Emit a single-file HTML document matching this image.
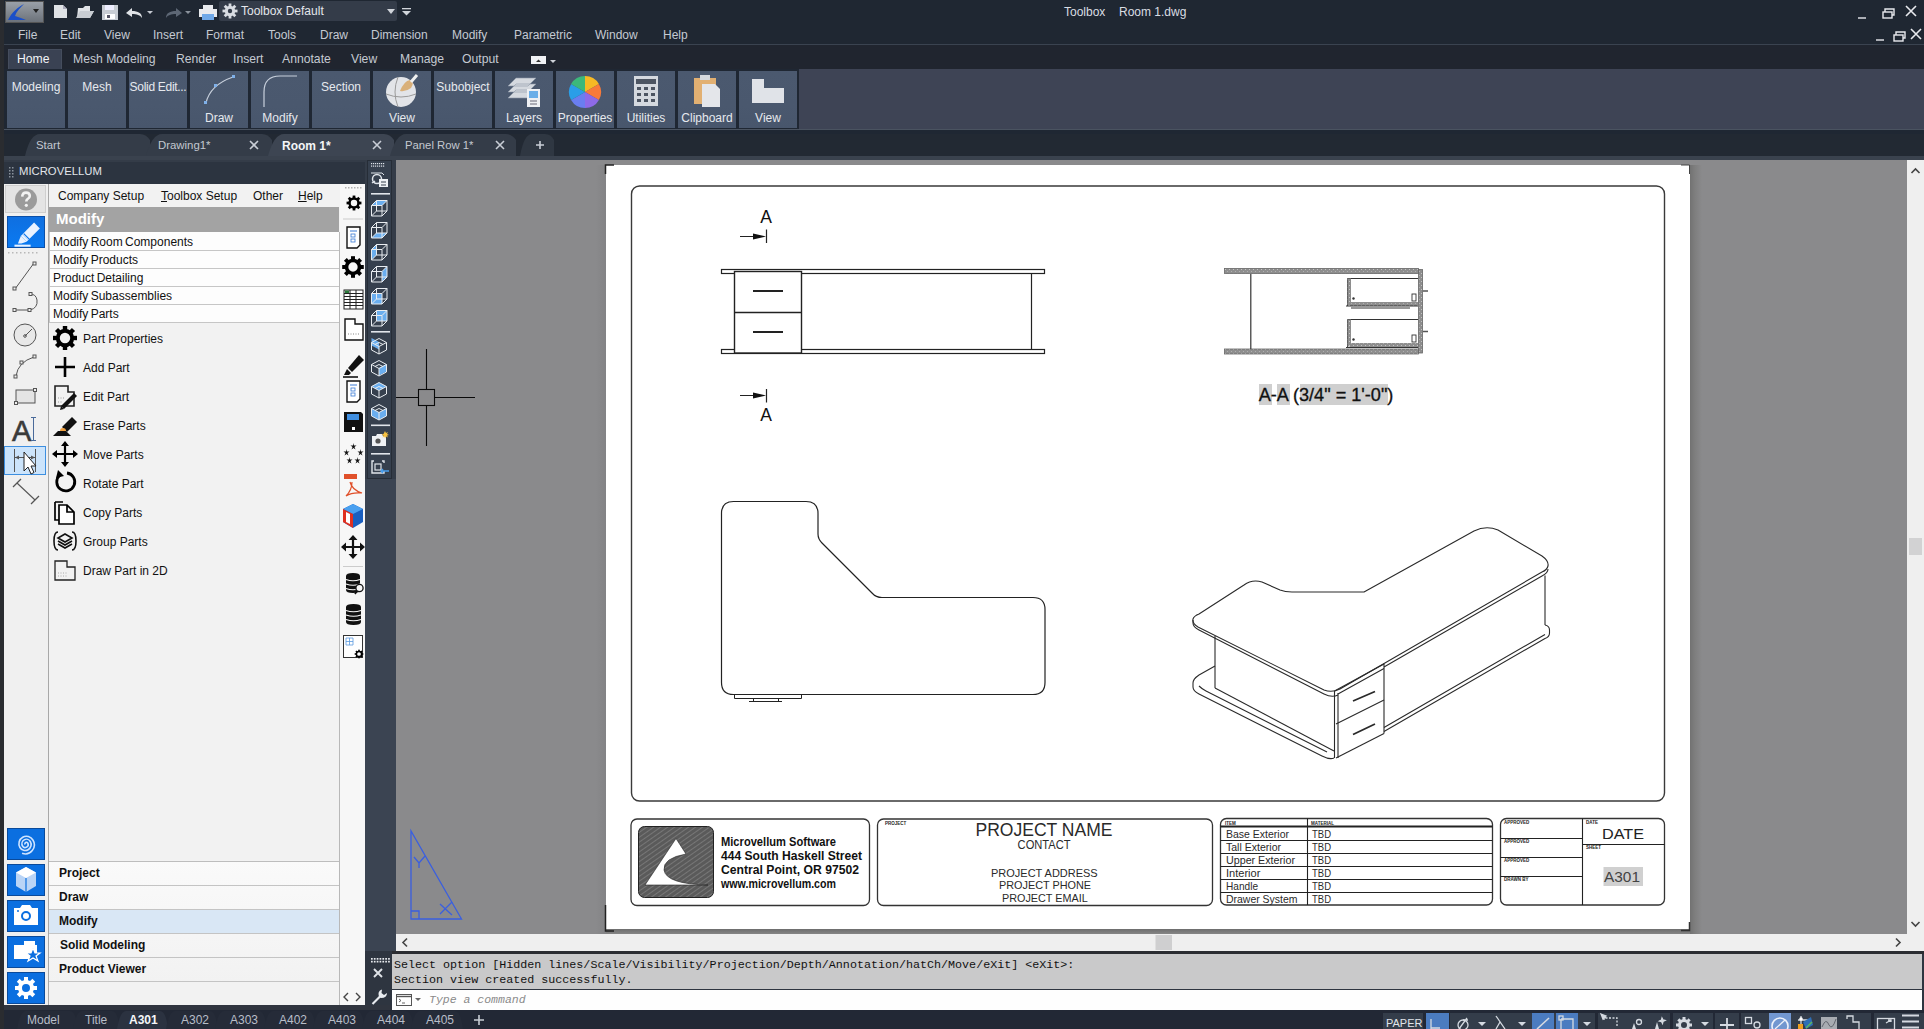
<!DOCTYPE html>
<html><head><meta charset="utf-8">
<style>
*{margin:0;padding:0;box-sizing:border-box}
html,body{width:1924px;height:1029px;overflow:hidden;background:#232a35;font-family:"Liberation Sans",sans-serif;position:relative}
.a{position:absolute}
.t{position:absolute;white-space:nowrap;line-height:1}
.mi{color:#c5cad2;font-size:12px;top:29px}
.rt{color:#c5cad2;font-size:12.2px;top:53px}
.rb{position:absolute;top:71px;height:57px;width:58px;background:linear-gradient(180deg,#4b596f 0%,#4a586e 60%,#48566c 100%)}
.rl{position:absolute;left:0;width:58px;text-align:center;color:#e6e9ee;font-size:12px;line-height:1;white-space:nowrap}
.dt{position:absolute;top:135px;height:24px;color:#b9bfc8;font-size:12px}
</style></head><body>
<!-- TITLE BAR -->
<div class="a" style="left:0;top:0;width:1924px;height:45px;background:#1f2732"></div>
<div class="a" style="left:0;top:0;width:4px;height:1029px;background:#2a2c30"></div>
<div class="a" style="left:4px;top:44px;width:1920px;height:1px;background:#3a4350"></div>
<div class="a" style="left:4px;top:45px;width:1920px;height:24px;background:#20252f"></div>
<!-- app button -->
<div class="a" style="left:5px;top:1px;width:39px;height:22px;background:linear-gradient(180deg,#9aa0a8,#6c727a);border:1px solid #555"></div>
<svg class="a" style="left:6px;top:2px" width="38" height="20" viewBox="0 0 38 20">
<path d="M2 18 C6 10 12 5 18 2 C14 6 10 10 9 14 C13 15 17 17 20 18 Z" fill="#1a4fc8"/>
<path d="M27 7 L33 7 L30 11 Z" fill="#222"/>
</svg>
<!-- QAT icons -->
<svg class="a" style="left:50px;top:3px" width="170" height="18" viewBox="0 0 170 18">
 <path d="M4 2 H13 L17 6 V15 H4 Z" fill="#dfe2e6"/><path d="M13 2 V6 H17" fill="#aab" />
 <path d="M28 5 H33 L35 3 H40 V8 H44 L40 15 H27 Z" fill="#dfe2e6"/><path d="M30 8 H44 L40 15 H26 Z" fill="#c8ccd2"/>
 <rect x="52" y="2" width="16" height="15" fill="#c8cdd4"/><rect x="55" y="2" width="9" height="5" fill="#eef"/><rect x="55" y="11" width="10" height="5" fill="#fff"/><rect x="57" y="12" width="3" height="3" fill="#556"/>
 <path d="M76 10 L82 5 V8 C88 8 92 10 92 15 C90 12 87 11 82 11 V14 Z" fill="#dfe2e6"/>
 <path d="M97 8 L103 8 L100 11 Z" fill="#c5cad2"/>
 <path d="M132 10 L126 5 V8 C120 8 116 10 116 15 C118 12 121 11 126 11 V14 Z" fill="#5d6775"/>
 <path d="M135 8 L141 8 L138 11 Z" fill="#8a929c"/>
 <rect x="153" y="2" width="10" height="4" fill="#e8eaee"/><rect x="149" y="6" width="18" height="8" fill="#e8eaee"/><rect x="152" y="11" width="12" height="6" fill="#6fa8e8"/>
</svg>
<div class="a" style="left:219px;top:1px;width:178px;height:20px;background:#343c49;border-radius:2px"></div>
<svg class="a" style="left:222px;top:3px" width="16" height="16" viewBox="0 0 16 16"><g fill="#d8dce2"><circle cx="8" cy="8" r="5.2"/><rect x="6.6" y="0.5" width="2.8" height="15"/><rect x="0.5" y="6.6" width="15" height="2.8"/><rect x="6.6" y="0.5" width="2.8" height="15" transform="rotate(45 8 8)"/><rect x="6.6" y="0.5" width="2.8" height="15" transform="rotate(-45 8 8)"/></g><circle cx="8" cy="8" r="2.2" fill="#343c49"/></svg>
<div class="t" style="left:241px;top:5px;color:#e4e7ec;font-size:12px">Toolbox Default</div>
<svg class="a" style="left:386px;top:8px" width="26" height="8" viewBox="0 0 26 8"><path d="M1 1 H9 L5 6 Z" fill="#d0d4da"/><rect x="16" y="0" width="9" height="1.3" fill="#d0d4da"/><path d="M16 3 H25 L20.5 7.5 Z" fill="#d0d4da"/></svg>
<div class="t" style="left:1064px;top:6px;color:#d9dde3;font-size:12px">Toolbox</div><div class="t" style="left:1119px;top:6px;color:#d9dde3;font-size:12px">Room 1.dwg</div>
<!-- window controls -->
<svg class="a" style="left:1850px;top:3px" width="74" height="40" viewBox="0 0 74 40">
 <g stroke="#e8eaee" stroke-width="1.4" fill="none">
 <path d="M8 15 H16"/>
 <rect x="33" y="9" width="9" height="6"/><path d="M35 9 V6 H44 V12 H42"/>
 <path d="M56 3 L66 13 M66 3 L56 13" stroke-width="1.6"/>
 <path d="M26 37 H34"/>
 <rect x="44" y="32" width="9" height="6"/><path d="M46 32 V29 H55 V35 H53"/>
 <path d="M61 26 L71 36 M71 26 L61 36" stroke-width="1.6"/>
 </g>
</svg>
<!-- MENU -->
<div class="t mi" style="left:18px">File</div>
<div class="t mi" style="left:60px">Edit</div>
<div class="t mi" style="left:104px">View</div>
<div class="t mi" style="left:153px">Insert</div>
<div class="t mi" style="left:206px">Format</div>
<div class="t mi" style="left:268px">Tools</div>
<div class="t mi" style="left:320px">Draw</div>
<div class="t mi" style="left:371px">Dimension</div>
<div class="t mi" style="left:452px">Modify</div>
<div class="t mi" style="left:514px">Parametric</div>
<div class="t mi" style="left:595px">Window</div>
<div class="t mi" style="left:663px">Help</div>
<!-- RIBBON TABS -->
<div class="a" style="left:8px;top:49px;width:54px;height:21px;background:#3a4253;border:1px solid #454d5d;border-bottom:none"></div>
<div class="t rt" style="left:17px;color:#f2f4f7">Home</div>
<div class="t rt" style="left:73px">Mesh Modeling</div>
<div class="t rt" style="left:176px">Render</div>
<div class="t rt" style="left:233px">Insert</div>
<div class="t rt" style="left:282px">Annotate</div>
<div class="t rt" style="left:351px">View</div>
<div class="t rt" style="left:400px">Manage</div>
<div class="t rt" style="left:462px">Output</div>
<div class="a" style="left:531px;top:56px;width:15px;height:8px;background:#f0f2f5"></div>
<svg class="a" style="left:531px;top:56px" width="26" height="9"><path d="M5 6 L7.5 3.5 L10 6 Z" fill="#333"/><path d="M19 4 H25 L22 7 Z" fill="#d0d4da"/></svg>
<!-- RIBBON PANEL -->
<div class="a" style="left:4px;top:69px;width:1920px;height:61px;background:#3e4455"></div>
<div class="a" style="left:4px;top:69px;width:795px;height:61px;background:#1f2733"></div>
<div class="a" style="left:4px;top:129px;width:1920px;height:1px;background:#4a5360"></div>
<div class="rb" style="left:7px"><div class="rl" style="top:10px">Modeling</div></div>
<div class="rb" style="left:68px"><div class="rl" style="top:10px">Mesh</div></div>
<div class="rb" style="left:129px"><div class="rl" style="top:10px;letter-spacing:-0.3px">Solid Edit...</div></div>
<div class="rb" style="left:190px"><div class="rl" style="top:41px">Draw</div></div>
<div class="rb" style="left:251px"><div class="rl" style="top:41px">Modify</div></div>
<div class="rb" style="left:312px"><div class="rl" style="top:10px">Section</div></div>
<div class="rb" style="left:373px"><div class="rl" style="top:41px">View</div></div>
<div class="rb" style="left:434px"><div class="rl" style="top:10px">Subobject</div></div>
<div class="rb" style="left:495px"><div class="rl" style="top:41px">Layers</div></div>
<div class="rb" style="left:556px"><div class="rl" style="top:41px">Properties</div></div>
<div class="rb" style="left:617px"><div class="rl" style="top:41px">Utilities</div></div>
<div class="rb" style="left:678px"><div class="rl" style="top:41px">Clipboard</div></div>
<div class="rb" style="left:739px"><div class="rl" style="top:41px">View</div></div>
<!-- ribbon icons -->
<svg class="a" style="left:190px;top:71px" width="620" height="40" viewBox="190 71 620 40">
 <!-- draw arc -->
 <path d="M206 103 Q210 85 233 77" stroke="#c8d0dc" stroke-width="1.2" fill="none"/>
 <rect x="204" y="101" width="3" height="3" fill="#7fb0e8"/><rect x="214" y="84" width="3" height="3" fill="#7fb0e8"/><rect x="232" y="75" width="3" height="3" fill="#7fb0e8"/>
 <!-- modify fillet -->
 <path d="M264 107 V92 Q264 76 280 76 H297" stroke="#c8d0dc" stroke-width="1.2" fill="none"/>
 <!-- view globe -->
 <circle cx="401" cy="92" r="15" fill="#e2e4e8"/>
 <path d="M386 94 Q401 100 416 94 M398 77 Q392 92 398 107" stroke="#9a9a9a" stroke-width="1" fill="none"/>
 <path d="M400 91 Q404 81 410 80 Q415 82 411 88 Q406 92 400 91 Z" fill="#d9b07a"/>
 <path d="M411 82 L417 75" stroke="#f0f0f0" stroke-width="3"/>
 <!-- layers -->
 <path d="M508 86 L516 78 H536 L528 86 Z M508 92 L516 84 H536 L528 92 Z M508 98 L516 90 H536 L528 98 Z" fill="#d5d9df" stroke="#8a95a5" stroke-width="0.6"/>
 <rect x="527" y="89" width="13" height="18" fill="#eef0f3"/><rect x="529" y="91" width="9" height="7" fill="#6aaee8"/>
 <path d="M530 101 H537 M530 104 H537" stroke="#445" stroke-width="0.8"/>
 <!-- properties color wheel -->
 <g transform="translate(585 92)">
  <path d="M0 0 L0 -16 A16 16 0 0 1 13.9 -8 Z" fill="#f7b924"/>
  <path d="M0 0 L13.9 -8 A16 16 0 0 1 13.9 8 Z" fill="#f97a3a"/>
  <path d="M0 0 L13.9 8 A16 16 0 0 1 0 16 Z" fill="#8e6ae8"/>
  <path d="M0 0 L0 16 A16 16 0 0 1 -13.9 8 Z" fill="#6a7ef0"/>
  <path d="M0 0 L-13.9 8 A16 16 0 0 1 -13.9 -8 Z" fill="#2a9ee8"/>
  <path d="M0 0 L-13.9 -8 A16 16 0 0 1 0 -16 Z" fill="#3cb87a"/>
 </g>
 <!-- utilities calculator -->
 <rect x="634" y="76" width="24" height="30" fill="#d5d9df"/><rect x="636" y="79" width="20" height="5" fill="#4d5562"/>
 <g fill="#4d5562"><rect x="637" y="87" width="4" height="3"/><rect x="644" y="87" width="4" height="3"/><rect x="651" y="87" width="4" height="3"/><rect x="637" y="93" width="4" height="3"/><rect x="644" y="93" width="4" height="3"/><rect x="651" y="93" width="4" height="3"/><rect x="637" y="99" width="4" height="3"/><rect x="644" y="99" width="4" height="3"/><rect x="651" y="99" width="4" height="3"/></g>
 <!-- clipboard -->
 <rect x="694" y="78" width="22" height="26" fill="#e2b072"/><rect x="700" y="75" width="10" height="5" fill="#d5d9df"/>
 <path d="M702 84 H715 L720 89 V107 H702 Z" fill="#e4e6ea"/>
 <!-- view L -->
 <path d="M752 79 H764 V88 H784 V103 H752 Z" fill="#e0e3e8"/>
</svg>
<!-- DOC TABS -->
<div class="a" style="left:4px;top:130px;width:1920px;height:30px;background:#222933"></div>
<div class="a" style="left:4px;top:130px;width:1920px;height:4px;background:#1f2733"></div>

<!-- doc tabs -->
<svg class="a" style="left:4px;top:130px" width="560" height="30" viewBox="4 130 560 30">
 <path d="M25 156 Q30 134 40 134 H140 Q146 134 150 140 L150 156 Z" fill="#343c48"/>
 <path d="M146 156 Q152 134 162 134 H262 Q268 134 272 140 L272 156 Z" fill="#343c48"/>
 <path d="M268 156 Q274 134 284 134 H384 Q390 134 394 140 L394 156 Z" fill="#3d4552"/>
 <path d="M390 156 Q396 134 406 134 H506 Q512 134 516 140 L516 156 Z" fill="#343c48"/>
 <path d="M520 156 Q524 134 532 134 H545 Q551 134 554 140 L554 156 Z" fill="#2f3742"/>
 <rect x="4" y="156" width="560" height="4" fill="#3a424e"/>
 <g stroke="#c9ced6" stroke-width="1.6"><path d="M250 141 L258 149 M258 141 L250 149"/><path d="M373 141 L381 149 M381 141 L373 149"/><path d="M496 141 L504 149 M504 141 L496 149"/></g>
 <path d="M536 145 H544 M540 141 V149" stroke="#c9ced6" stroke-width="1.6"/>
</svg>
<div class="a" style="left:4px;top:156px;width:1920px;height:4px;background:#3a424e"></div>
<div class="t" style="left:36px;top:140px;color:#c3c8d0;font-size:11.4px">Start</div>
<div class="t" style="left:158px;top:140px;color:#c3c8d0;font-size:11.4px">Drawing1*</div>
<div class="t" style="left:282px;top:140px;color:#f4f6f8;font-size:12px;font-weight:bold">Room 1*</div>
<div class="t" style="left:405px;top:140px;color:#c3c8d0;font-size:11.3px">Panel Row 1*</div>

<!-- LEFT PANEL -->
<div class="a" style="left:4px;top:160px;width:392px;height:850px;background:#343c48"></div>
<div class="a" style="left:4px;top:162px;width:361px;height:22px;background:#2c3440"></div>
<svg class="a" style="left:9px;top:166px" width="6" height="14"><g fill="#8a929c"><rect x="0" y="1" width="1.5" height="1.5"/><rect x="3" y="1" width="1.5" height="1.5"/><rect x="0" y="4" width="1.5" height="1.5"/><rect x="3" y="4" width="1.5" height="1.5"/><rect x="0" y="7" width="1.5" height="1.5"/><rect x="3" y="7" width="1.5" height="1.5"/><rect x="0" y="10" width="1.5" height="1.5"/><rect x="3" y="10" width="1.5" height="1.5"/></g></svg>
<div class="t" style="left:19px;top:166px;color:#e2e5ea;font-size:11.3px">MICROVELLUM</div>
<div class="a" style="left:4px;top:184px;width:361px;height:821px;background:#f2f2f2"></div>
<div class="a" style="left:4px;top:184px;width:44px;height:821px;background:#f0f0f0"></div>
<div class="a" style="left:48px;top:184px;width:1px;height:821px;background:#a8a8a8"></div>
<div class="a" style="left:340px;top:184px;width:25px;height:821px;background:#f7f7f7"></div>
<div class="a" style="left:339px;top:232px;width:1px;height:773px;background:#b8b8b8"></div>
<!-- ? button -->
<div class="a" style="left:5px;top:185px;width:41px;height:28px;background:#e4e4e4;border:1px solid #cfcfcf"></div>
<svg class="a" style="left:14px;top:188px" width="24" height="24" viewBox="0 0 24 24"><circle cx="12" cy="11.5" r="11" fill="#9b9b9b"/><path d="M8.2 8.6 Q8.5 4.6 12 4.6 Q15.8 4.6 15.8 8 Q15.8 10 13.5 11.2 Q12.3 11.9 12.3 13.6" stroke="#f2f2f2" stroke-width="2.6" fill="none"/><circle cx="12.3" cy="17.3" r="1.6" fill="#f2f2f2"/></svg>
<!-- pencil blue -->
<div class="a" style="left:7px;top:216px;width:38px;height:32px;background:linear-gradient(180deg,#0f6fe0,#0a7af2);border:1px solid #0a4fa8"></div>
<svg class="a" style="left:11px;top:218px" width="30" height="30" viewBox="0 0 26 26"><path d="M10 14 L20 4 L25 9 L15 19 Z" fill="#eaf2ff"/><path d="M8.5 15.5 L10 14 L15 19 L13.5 20.5 Z" fill="#eaf2ff"/><path d="M8.5 15.5 L13.5 20.5 L9 22 L6 22 Z" fill="#eaf2ff"/><path d="M3 24 H17" stroke="#eaf2ff" stroke-width="1.8"/><path d="M11 13.5 L16 18.5" stroke="#0a72e8" stroke-width="1"/></svg>
<svg class="a" style="left:8px;top:252px" width="32" height="3"><g fill="#b8b8b8"><rect x="0" y="0" width="1.5" height="1.5"/><rect x="4" y="0" width="1.5" height="1.5"/><rect x="8" y="0" width="1.5" height="1.5"/><rect x="12" y="0" width="1.5" height="1.5"/><rect x="16" y="0" width="1.5" height="1.5"/><rect x="20" y="0" width="1.5" height="1.5"/><rect x="24" y="0" width="1.5" height="1.5"/><rect x="28" y="0" width="1.5" height="1.5"/></g></svg>
<!-- left draw tool icons -->
<svg class="a" style="left:4px;top:256px" width="44" height="250" viewBox="4 256 44 250">
 <g stroke="#555" stroke-width="1" fill="none">
  <path d="M15 289 L34 263"/><rect x="13" y="287" width="3" height="3" fill="#f0f0f0"/><rect x="33" y="262" width="3" height="3" fill="#f0f0f0"/>
  <path d="M14 310 H30 Q38 308 37 300 Q36 294 30 294"/><rect x="13" y="308.5" width="3" height="3" fill="#f0f0f0"/><rect x="28" y="308.5" width="3" height="3" fill="#f0f0f0"/><rect x="29" y="292.5" width="3" height="3" fill="#f0f0f0"/>
  <circle cx="25" cy="335" r="11" fill="#e8e8e8"/><path d="M25 336 L32 329"/><circle cx="25" cy="336" r="1.3"/>
  <path d="M16 376 Q18 362 34 357"/><rect x="14" y="375" width="3" height="3" fill="#f0f0f0"/><rect x="33" y="355" width="3" height="3" fill="#f0f0f0"/><rect x="20" y="361" width="3" height="3" fill="#f0f0f0"/>
  <rect x="16" y="390" width="19" height="13" fill="#e4e4e4"/><rect x="14.5" y="401.5" width="3" height="3" fill="#f0f0f0"/><rect x="33.5" y="388.5" width="3" height="3" fill="#f0f0f0"/>
 </g>
 <text x="12" y="441" font-family="Liberation Sans" font-size="29" fill="#3a3a3a" stroke="#3a3a3a" stroke-width="0.6">A</text>
 <path d="M33.5 417 V441 M31 417.5 H36 M31 440.5 H36" stroke="#4a6a9a" stroke-width="1"/>
 <rect x="4.5" y="446.5" width="41" height="28" fill="#cce4fb" stroke="#3d8fe0" stroke-width="1"/>
 <path d="M14.5 449 V472 M35.5 449 V472 M15 457.5 H35" stroke="#555" stroke-width="1"/>
 <path d="M15 457.5 L19 455.5 V459.5 Z M35 457.5 L31 455.5 V459.5 Z" fill="#555"/>
 <path d="M24 452 V471 L28 467 L31 474 L34 472.5 L31 466 L36 466 Z" fill="#fff" stroke="#222" stroke-width="1"/>
 <path d="M17 483 L35 500" stroke="#555" stroke-width="1.1"/><path d="M13 487 L21 479 M31 504 L39 496" stroke="#555" stroke-width="1.3"/>
</svg>
<!-- menu row -->
<div class="t" style="left:58px;top:190px;color:#111;font-size:12px">Company Setup</div>
<div class="t" style="left:161px;top:190px;color:#111;font-size:12px"><u>T</u>oolbox Setup</div>
<div class="t" style="left:253px;top:190px;color:#111;font-size:12px">Other</div>
<div class="t" style="left:298px;top:190px;color:#111;font-size:12px"><u>H</u>elp</div>
<!-- Modify header -->
<div class="a" style="left:49px;top:207px;width:290px;height:25px;background:#a3a3a3"></div>
<div class="t" style="left:56px;top:211px;color:#fff;font-size:15px;font-weight:bold">Modify</div>
<!-- list rows -->
<div class="a" style="left:49px;top:232px;width:290px;height:90px;background:#fdfdfd"></div>
<div class="a" style="left:49px;top:250px;width:290px;height:1px;background:#c6c6c6"></div>
<div class="a" style="left:49px;top:268px;width:290px;height:1px;background:#c6c6c6"></div>
<div class="a" style="left:49px;top:286px;width:290px;height:1px;background:#c6c6c6"></div>
<div class="a" style="left:49px;top:304px;width:290px;height:1px;background:#c6c6c6"></div>
<div class="a" style="left:49px;top:322px;width:290px;height:1px;background:#c6c6c6"></div>
<div class="a" style="left:49px;top:232px;width:1px;height:90px;background:#c6c6c6"></div>
<div class="t" style="left:53px;top:236px;color:#111;font-size:12px;word-spacing:-1px">Modify Room Components</div>
<div class="t" style="left:53px;top:254px;color:#111;font-size:12px;word-spacing:-1px">Modify Products</div>
<div class="t" style="left:53px;top:272px;color:#111;font-size:12px;word-spacing:-1px">Product Detailing</div>
<div class="t" style="left:53px;top:290px;color:#111;font-size:12px;word-spacing:-1px">Modify Subassemblies</div>
<div class="t" style="left:53px;top:308px;color:#111;font-size:12px;word-spacing:-1px">Modify Parts</div>
<!-- icon list -->
<div class="t" style="left:83px;top:333px;color:#111;font-size:12px">Part Properties</div>
<div class="t" style="left:83px;top:362px;color:#111;font-size:12px">Add Part</div>
<div class="t" style="left:83px;top:391px;color:#111;font-size:12px">Edit Part</div>
<div class="t" style="left:83px;top:420px;color:#111;font-size:12px">Erase Parts</div>
<div class="t" style="left:83px;top:449px;color:#111;font-size:12px">Move Parts</div>
<div class="t" style="left:83px;top:478px;color:#111;font-size:12px">Rotate Part</div>
<div class="t" style="left:83px;top:507px;color:#111;font-size:12px">Copy Parts</div>
<div class="t" style="left:83px;top:536px;color:#111;font-size:12px">Group Parts</div>
<div class="t" style="left:83px;top:565px;color:#111;font-size:12px">Draw Part in 2D</div>
<svg class="a" style="left:50px;top:324px" width="30" height="262" viewBox="50 324 30 262">
 <defs><g id="gear"><circle r="7.2" fill="none" stroke="#000" stroke-width="4"/><g fill="#000"><rect x="-2.2" y="-12" width="4.4" height="5"/><rect x="-2.2" y="7" width="4.4" height="5"/><rect x="-12" y="-2.2" width="5" height="4.4"/><rect x="7" y="-2.2" width="5" height="4.4"/><g transform="rotate(45)"><rect x="-2.2" y="-12" width="4.4" height="5"/><rect x="-2.2" y="7" width="4.4" height="5"/><rect x="-12" y="-2.2" width="5" height="4.4"/><rect x="7" y="-2.2" width="5" height="4.4"/></g></g></g></defs>
 <use href="#gear" x="65" y="338"/>
 <path d="M55 367 H75 M65 357 V377" stroke="#000" stroke-width="2.6"/>
 <path d="M55 386 H68 V392 H74 V406 H55 Z" fill="none" stroke="#222" stroke-width="1.6"/>
 <path d="M58 398 H64 M58 402 H62" stroke="#888" stroke-width="0.8" stroke-dasharray="1 1.5"/>
 <path d="M61 406 L74 393 L77 396 L64 409 Z" fill="#111"/><path d="M61 406 L60 410 L64 409 Z" fill="#111"/>
 <path d="M62 427 L72 417 L77 422 L67 432 Z" fill="#111"/><circle cx="63" cy="431" r="3" fill="#f0a040"/><path d="M53 436 L58 431 H66 L71 436 Z" fill="#111"/>
 <path d="M65 444 V464 M55 454 H75" stroke="#000" stroke-width="2.2"/><path d="M65 441 L61 446 H69 Z M65 467 L61 462 H69 Z M52 454 L57 450 V458 Z M78 454 L73 450 V458 Z" fill="#000"/>
 <path d="M60 475 A9 9 0 1 0 67 473" fill="none" stroke="#000" stroke-width="2.8"/><path d="M58 470 L64 476 L56 478 Z" fill="#000"/>
 <path d="M59 505 H67 L74 512 V524 H59 Z M67 505 V512 H74" fill="#fff" stroke="#000" stroke-width="1.7"/><path d="M55 502 H63 M55 502 V520 H59" fill="none" stroke="#000" stroke-width="1.7"/>
 <path d="M58 532 Q54 532 54 541 Q54 550 58 550 M72 532 Q76 532 76 541 Q76 550 72 550" fill="none" stroke="#111" stroke-width="1.6"/>
 <path d="M65 534 L72 538 L65 542 L58 538 Z M58 541 L65 545 L72 541 M58 544 L65 548 L72 544" fill="none" stroke="#111" stroke-width="1.6"/>
 <path d="M55 561 H67 V567 H75 V580 H55 Z" fill="none" stroke="#222" stroke-width="1.3"/><path d="M58 573 H68 M58 576 H68" stroke="#999" stroke-width="0.8" stroke-dasharray="1 1.5"/>
</svg>
<!-- bottom nav -->
<div class="a" style="left:49px;top:862px;width:290px;height:120px;background:linear-gradient(180deg,#fafafa,#f2f2f2)"></div>
<div class="a" style="left:49px;top:910px;width:290px;height:24px;background:#d9e7f5"></div>
<div class="a" style="left:49px;top:861px;width:290px;height:1px;background:#bdbdbd"></div>
<div class="a" style="left:49px;top:885px;width:290px;height:1px;background:#c4c4c4"></div>
<div class="a" style="left:49px;top:909px;width:290px;height:1px;background:#c4c4c4"></div>
<div class="a" style="left:49px;top:933px;width:290px;height:1px;background:#c4c4c4"></div>
<div class="a" style="left:49px;top:957px;width:290px;height:1px;background:#c4c4c4"></div>
<div class="a" style="left:49px;top:981px;width:290px;height:1px;background:#c4c4c4"></div>
<div class="t" style="left:59px;top:867px;color:#111;font-size:12px;font-weight:bold">Project</div>
<div class="t" style="left:59px;top:891px;color:#111;font-size:12px;font-weight:bold">Draw</div>
<div class="t" style="left:59px;top:915px;color:#111;font-size:12px;font-weight:bold">Modify</div>
<div class="t" style="left:60px;top:939px;color:#111;font-size:12px;font-weight:bold">Solid Modeling</div>
<div class="t" style="left:59px;top:963px;color:#111;font-size:12px;font-weight:bold">Product Viewer</div>
<!-- blue buttons -->
<div class="a" style="left:7px;top:828px;width:38px;height:32px;background:#0b6fe0;border:1px solid #0a4a9a"></div>
<div class="a" style="left:7px;top:864px;width:38px;height:32px;background:#0b6fe0;border:1px solid #0a4a9a"></div>
<div class="a" style="left:7px;top:900px;width:38px;height:32px;background:#0b6fe0;border:1px solid #0a4a9a"></div>
<div class="a" style="left:7px;top:936px;width:38px;height:32px;background:#0b6fe0;border:1px solid #0a4a9a"></div>
<div class="a" style="left:7px;top:972px;width:38px;height:32px;background:#0b6fe0;border:1px solid #0a4a9a"></div>
<svg class="a" style="left:7px;top:828px" width="38" height="176" viewBox="7 828 38 176">
 <g fill="none" stroke="#cfe4ff" stroke-width="1.5">
  <path d="M25 844 A1.5 1.5 0 0 1 28 844 A3 3 0 0 1 22 844 A4.5 4.5 0 0 1 31 844 A6 6 0 0 1 19 844 A7.5 7.5 0 0 1 34 844 A9 9 0 0 1 18 850" stroke-width="1.6" transform="rotate(-30 26 844)"/>
 </g>
 <path d="M26 867 L36 872.5 V886 L26 892 L16 886 V872.5 Z" fill="#b9d4f6"/><path d="M26 867 L36 872.5 L26 878 L16 872.5 Z" fill="#fff"/><path d="M26 878 V892" stroke="#0b6fe0" stroke-width="1.2"/>
 <path d="M14 908 H20 L22 905 H30 L32 908 H38 V925 H14 Z" fill="#fff"/><circle cx="26" cy="916" r="4" fill="none" stroke="#0b6fe0" stroke-width="2"/><circle cx="18" cy="911" r="1" fill="#0b6fe0"/>
 <path d="M14 945 H24 V941 H35 V945 H37 V959 H14 Z" fill="#fff"/><path d="M33 948 L35 953 L40 953 L36 956 L38 961 L33 958 L28 961 L30 956 L26 953 L31 953 Z" fill="#0b6fe0" stroke="#fff" stroke-width="1.2"/>
 <g transform="translate(26 988)"><circle r="6" fill="none" stroke="#fff" stroke-width="4"/><g fill="#fff"><rect x="-2" y="-11" width="4" height="5"/><rect x="-2" y="6" width="4" height="5"/><rect x="-11" y="-2" width="5" height="4"/><rect x="6" y="-2" width="5" height="4"/><g transform="rotate(45)"><rect x="-2" y="-11" width="4" height="5"/><rect x="-2" y="6" width="4" height="5"/><rect x="-11" y="-2" width="5" height="4"/><rect x="6" y="-2" width="5" height="4"/></g></g></g>
</svg>
<!-- scroll arrows -->
<svg class="a" style="left:340px;top:990px" width="25" height="14"><path d="M8 3 L4 7 L8 11 M16 3 L20 7 L16 11" stroke="#444" stroke-width="1.4" fill="none"/></svg>


<!-- RIGHT TOOL COLUMN 1 -->
<svg class="a" style="left:340px;top:184px" width="25" height="480" viewBox="340 184 25 480">
 <g fill="#b0b0b0"><rect x="345" y="187" width="1.5" height="1.5"/><rect x="348" y="187" width="1.5" height="1.5"/><rect x="351" y="187" width="1.5" height="1.5"/><rect x="354" y="187" width="1.5" height="1.5"/><rect x="357" y="187" width="1.5" height="1.5"/><rect x="360" y="187" width="1.5" height="1.5"/></g>
 <g transform="translate(354 203) scale(0.62)"><use href="#gear"/></g>
 <rect x="343" y="218.5" width="20" height="1" fill="#ccc"/>
 <path d="M347 227 H360 V245 L357 248 H347 Z" fill="#fff" stroke="#111" stroke-width="1.4"/><path d="M350 231 H357" stroke="#3a7bd5" stroke-width="1"/><rect x="351" y="234" width="4" height="3" fill="none" stroke="#3a7bd5" stroke-width="0.8"/><rect x="351" y="239" width="4" height="3" fill="none" stroke="#3a7bd5" stroke-width="0.8"/>
 <g transform="translate(353 267) scale(0.9)"><use href="#gear"/></g>
 <rect x="344" y="290" width="19" height="19" fill="#fff" stroke="#222" stroke-width="1"/>
 <path d="M344 293.5 H363 M344 296.5 H363 M344 299.5 H363 M344 302.5 H363 M344 305.5 H363 M350 290 V309 M356 290 V309" stroke="#222" stroke-width="1"/><rect x="345" y="290.5" width="4" height="2.5" fill="#2a7a3a"/>
 <path d="M345 319 H355 V324 H363 V340 H345 Z" fill="#fff" stroke="#111" stroke-width="1.4"/><path d="M348 334 H360" stroke="#666" stroke-width="0.8" stroke-dasharray="1 1.5"/>
 <path d="M348 368 L359 355 L364 360 L352 372 Z" fill="#111"/><path d="M347 369 L351 373 L349 375 L344 375 Z" fill="#111"/><path d="M343 377 H358" stroke="#111" stroke-width="1.6"/>
 <path d="M347 381 H360 V399 L357 402 H347 Z" fill="#fff" stroke="#111" stroke-width="1.4"/><path d="M350 385 H357" stroke="#3a7bd5" stroke-width="1"/><rect x="351" y="388" width="4" height="3" fill="none" stroke="#3a7bd5" stroke-width="0.8"/><rect x="351" y="393" width="4" height="3" fill="none" stroke="#3a7bd5" stroke-width="0.8"/>
 <path d="M344 412 H361 L363 414 V432 H344 Z" fill="#111"/><rect x="347" y="414" width="12" height="6" fill="#3f8ee0"/><path d="M348 432 V426 H359 V432 Z" fill="#111"/><rect x="352" y="427" width="3" height="3" fill="#fff"/>
 <g fill="#111"><path d="M353 443 l1 2.5 h2.5 l-2 1.5 l1 2.5 l-2 -1.5 l-2 1.5 l1 -2.5 l-2 -1.5 h2.5 z"/><path d="M346 449 l1 2.5 h2.5 l-2 1.5 l1 2.5 l-2 -1.5 l-2 1.5 l1 -2.5 l-2 -1.5 h2.5 z"/><path d="M360 449 l1 2.5 h2.5 l-2 1.5 l1 2.5 l-2 -1.5 l-2 1.5 l1 -2.5 l-2 -1.5 h2.5 z"/><path d="M349 457 l1 2.5 h2.5 l-2 1.5 l1 2.5 l-2 -1.5 l-2 1.5 l1 -2.5 l-2 -1.5 h2.5 z"/><path d="M357 457 l1 2.5 h2.5 l-2 1.5 l1 2.5 l-2 -1.5 l-2 1.5 l1 -2.5 l-2 -1.5 h2.5 z"/></g>
 <rect x="344" y="474" width="13" height="5" fill="#e0502a"/><path d="M350 482 Q352 490 362 493 Q352 492 346 496 Q352 490 352 482" fill="none" stroke="#e0502a" stroke-width="1.2"/>
 <path d="M353 504 L363 509 V522 L353 528 L343 522 V509 Z" fill="#1a5fc0"/><path d="M353 504 L363 509 L353 514 L343 509 Z" fill="#4aa0f0"/><path d="M343 509 L353 514 V528 L343 522 Z" fill="#e03020"/><path d="M346 512 L350 514 V524 L346 522 Z" fill="#fff"/>
 <path d="M353 537 V557 M343 547 H363" stroke="#111" stroke-width="2.2"/><path d="M353 535 L348.5 540 H357.5 Z M353 559 L348.5 554 H357.5 Z M341 547 L346 542.5 V551.5 Z M365 547 L360 542.5 V551.5 Z" fill="#111"/>
 <rect x="343" y="566" width="20" height="1" fill="#ccc"/>
 <path d="M346 576 Q346 573 353 573 Q360 573 360 576 V590 Q360 593 353 593 Q346 593 346 590 Z" fill="#111"/>
 <path d="M346 579.5 Q353 582 360 579.5 M346 584 Q353 586.5 360 584 M346 588.5 Q353 591 360 588.5" stroke="#f7f7f7" stroke-width="1.2" fill="none"/>
 <circle cx="359.5" cy="588" r="3.6" fill="#f7f7f7" stroke="#111" stroke-width="1.3"/><path d="M357 591 L355 594" stroke="#111" stroke-width="1.6"/>
 <path d="M346 607 Q346 604 353.5 604 Q361 604 361 607 V622 Q361 625 353.5 625 Q346 625 346 622 Z" fill="#111"/>
 <path d="M346 610.5 Q353.5 613 361 610.5 M346 615 Q353.5 617.5 361 615 M346 619.5 Q353.5 622 361 619.5" stroke="#f7f7f7" stroke-width="1.2" fill="none"/>
 <rect x="343.5" y="635.5" width="19" height="22" fill="#fff" stroke="#333" stroke-width="1"/><path d="M346 638 H353 V645 H346 Z M349.5 638 V645 M346 641.5 H353" stroke="#5b9ae0" stroke-width="0.8" fill="none"/>
 <g transform="translate(359 654) scale(0.36)"><use href="#gear"/></g>
</svg>
<!-- RIGHT TOOL COLUMN 2 -->
<div class="a" style="left:367px;top:160px;width:25px;height:319px;background:#36404e;border:1px solid #262d37"></div>
<svg class="a" style="left:367px;top:160px" width="25" height="320" viewBox="367 160 25 320">
 <defs>
  <g id="cube"><path d="M0.5 5.5 H11 V16 H0.5 Z M5.5 0.5 H16 V11 H5.5 Z M0.5 5.5 L5.5 0.5 M11 5.5 L16 0.5 M11 16 L16 11 M0.5 16 L5.5 11" fill="none" stroke="#e8ecf0" stroke-width="1"/></g>
  <g id="hcube"><path d="M8 0.5 L15.5 4.5 V12 L8 16 L0.5 12 V4.5 Z M0.5 4.5 L8 8.5 L15.5 4.5 M8 8.5 V16 M4 6.5 L8 4.5 L12 6.5" fill="none" stroke="#e8ecf0" stroke-width="1"/></g>
 </defs>
 <g fill="#dde2e8"><rect x="371" y="163" width="1.2" height="1.2"/><rect x="371" y="165.5" width="1.2" height="1.2"/><rect x="373" y="163" width="1.2" height="1.2"/><rect x="373" y="165.5" width="1.2" height="1.2"/><rect x="375" y="163" width="1.2" height="1.2"/><rect x="375" y="165.5" width="1.2" height="1.2"/><rect x="377" y="163" width="1.2" height="1.2"/><rect x="377" y="165.5" width="1.2" height="1.2"/><rect x="379" y="163" width="1.2" height="1.2"/><rect x="379" y="165.5" width="1.2" height="1.2"/><rect x="381" y="163" width="1.2" height="1.2"/><rect x="381" y="165.5" width="1.2" height="1.2"/><rect x="383" y="163" width="1.2" height="1.2"/><rect x="383" y="165.5" width="1.2" height="1.2"/></g>
 <circle cx="377" cy="179" r="4.5" fill="none" stroke="#dfe4ea" stroke-width="1.5"/><path d="M372 183 L375 181" stroke="#dfe4ea" stroke-width="1.5"/><path d="M371 173 H382 L384 175" fill="none" stroke="#dfe4ea" stroke-width="1"/><rect x="379" y="179" width="9" height="8" fill="#eef1f4"/><path d="M381 182 H386 M381 185 H386" stroke="#36404e" stroke-width="1"/>
 <rect x="371" y="193" width="19" height="1.6" fill="#e0e4ea"/>
 <path d="M371.5 205.5 L376.5 200.5 H387 L382 205.5 Z" fill="#6aaeef"/><use href="#cube" x="371" y="200"/>
 <path d="M371.5 238 L376.5 233 H387 L382 238 Z" fill="#6aaeef"/><use href="#cube" x="371" y="222"/>
 <path d="M371.5 249.5 L376.5 244.5 V255 L371.5 260 Z" fill="#6aaeef"/><use href="#cube" x="371" y="244"/>
 <path d="M382 271.5 L387 266.5 V277 L382 282 Z" fill="#6aaeef"/><use href="#cube" x="371" y="266"/>
 <rect x="371.5" y="293.5" width="10.5" height="10.5" fill="#6aaeef"/><use href="#cube" x="371" y="288"/>
 <rect x="376.5" y="310.5" width="10.5" height="10.5" fill="#6aaeef"/><use href="#cube" x="371" y="310"/>
 <rect x="371" y="331" width="19" height="1.6" fill="#e0e4ea"/>
 <path d="M371.5 338 L379 342 V349.5 L371.5 345.5 Z" fill="#6aaeef"/><use href="#hcube" x="371" y="338"/>
 <path d="M379 368 L386.5 364 V371.5 L379 375.5 Z" fill="#6aaeef"/><use href="#hcube" x="371" y="360"/>
 <path d="M371.5 386.5 L379 382.5 L386.5 386.5 L379 390.5 Z" fill="#6aaeef"/><use href="#hcube" x="371" y="382"/>
 <path d="M379 412.5 V420 L386.5 416 V408.5 Z M371.5 408.5 L379 412.5 V420 L371.5 416 Z" fill="#6aaeef"/><use href="#hcube" x="371" y="404"/>
 <rect x="371" y="424.5" width="19" height="1.6" fill="#e0e4ea"/>
 <path d="M372 436 H376 L377 434 H382 L383 436 H386 V446 H372 Z" fill="#eef1f4"/><circle cx="378" cy="441" r="2.6" fill="#555"/><path d="M385 431 l1 2 l2 -1 l-1 2 l2 1 l-2 0.5 l1 2 l-2 -1 l-1 2 l-0.5 -2 l-2 1 l1 -2 l-2 -1 l2 -0.5 z" fill="#f5c040"/>
 <rect x="371" y="453" width="19" height="1.6" fill="#e0e4ea"/>
 <path d="M374 461 H372 V473 H384 V471 M382 461 H384 V463" fill="none" stroke="#dfe4ea" stroke-width="1.4"/><rect x="375" y="464" width="6" height="6" fill="none" stroke="#dfe4ea" stroke-width="1.2"/><path d="M381 471 H389 M383 469 L381 471 L383 473" stroke="#4aa0f0" stroke-width="1.4" fill="none"/>
</svg>


<!-- DRAWING AREA -->
<div class="a" style="left:365px;top:479px;width:31px;height:475px;background:#3b4452"></div>
<div class="a" style="left:396px;top:160px;width:1511px;height:774px;background:#8a8a8c"></div>

<!-- paper shadow & paper -->
<div class="a" style="left:606px;top:929px;width:1086px;height:5px;background:linear-gradient(180deg,#6e6e6e,#858585)"></div>
<div class="a" style="left:1690px;top:165px;width:12px;height:769px;background:linear-gradient(90deg,#727272,#7e7e7e 40%,#8a8a8c)"></div><div class="a" style="left:596px;top:165px;width:10px;height:769px;background:linear-gradient(90deg,#8a8a8c,#838385)"></div>
<div class="a" style="left:606px;top:165px;width:1084px;height:764px;background:#fff"></div>

<!-- PAPER DRAWING -->
<svg class="a" style="left:396px;top:160px" width="1511" height="774" viewBox="396 160 1511 774">
 <!-- corner marks -->
 <path d="M605.5 174 V165 H614" stroke="#222" stroke-width="1.5" fill="none"/><path d="M605.5 905 V931 H614" stroke="#222" stroke-width="1.5" fill="none"/>
 <path d="M1689.5 165 H1681 M1689.5 165 V174" stroke="#444" stroke-width="1" fill="none"/>
 <path d="M1689.5 922 V930.5 H1681" stroke="#333" stroke-width="1.5" fill="none"/>
 <!-- ucs icon -->
 <g stroke="#3a5fe0" stroke-width="1.3" fill="none">
  <path d="M411 831 V919 H461.5 Z"/>
  <path d="M411 911 H419 V919"/>
  <path d="M414 857 L419 863 L425 856 M419 863 V868"/>
  <path d="M440 904 L452 915 M452 902 L440 914"/>
 </g>
 <!-- crosshair -->
 <g stroke="#0a0a0a" stroke-width="1.1" fill="none">
  <path d="M426.5 349 V389 M426.5 405 V446 M396 397.5 H418 M434 397.5 H475"/>
  <rect x="418.5" y="389.5" width="16" height="16"/>
 </g>
 <!-- inner border -->
 <rect x="631.5" y="186" width="1033" height="615" rx="8" fill="none" stroke="#3a3a3a" stroke-width="1.4"/>
 <!-- ELEVATION -->
 <g stroke="#222" stroke-width="1.2" fill="none">
  <rect x="721.5" y="269.5" width="323" height="4"/>
  <rect x="721.5" y="349.5" width="323" height="4"/>
  <rect x="734.5" y="271.5" width="67" height="81.5" fill="#fff" stroke-width="1.4"/>
  <path d="M734.5 312.5 H801.5" stroke-width="1.3"/>
  <path d="M1031.5 273.5 V349.5"/>
  <path d="M753 291 H783 M753 332 H783" stroke-width="1.8"/>
  <path d="M740 236.5 H756 M766.5 229.5 V243"/>
 </g>
 <path d="M753 233.5 L766 236.5 L753 239.5 Z" fill="#111"/>
 <path d="M740 395.5 H756 M766.5 389 V402.5" stroke="#222" stroke-width="1.2"/>
 <path d="M753 392.5 L766 395.5 L753 398.5 Z" fill="#111"/>
 <text x="766" y="223" font-family="Liberation Sans" font-size="17.5" text-anchor="middle" fill="#111">A</text>
 <text x="766" y="421" font-family="Liberation Sans" font-size="17.5" text-anchor="middle" fill="#111">A</text>
 <!-- SECTION A-A -->
 <defs>
  <pattern id="hatch" width="4" height="4" patternUnits="userSpaceOnUse"><rect width="4" height="4" fill="#8e8e8e"/><rect x="1" y="1" width="1" height="1" fill="#c4c4c4"/><rect x="3" y="3" width="1" height="1" fill="#b0b0b0"/></pattern>
 </defs>
 <rect x="1224.5" y="268.5" width="194" height="5" fill="url(#hatch)" stroke="#666" stroke-width="0.8"/>
 <rect x="1224.5" y="349" width="194" height="5" fill="url(#hatch)" stroke="#666" stroke-width="0.8"/>
 <rect x="1418.5" y="269.5" width="4" height="83.5" fill="url(#hatch)" stroke="#666" stroke-width="0.8"/>
 <path d="M1250.8 274 V349" stroke="#333" stroke-width="1.2"/>
 <g>
  <path d="M1347.5 306 V278.5 H1418" stroke="#333" stroke-width="1" fill="none"/>
  <rect x="1347.5" y="278.5" width="3.5" height="27" fill="url(#hatch)"/>
  <rect x="1350" y="302" width="68" height="4" fill="url(#hatch)"/>
  <path d="M1346 306 H1418 M1351 308 H1410" stroke="#333" stroke-width="1" fill="none"/>
  <rect x="1412" y="294" width="4" height="7" fill="none" stroke="#333" stroke-width="0.9"/>
  <circle cx="1353.5" cy="298.5" r="1.2" fill="#333"/>
  <path d="M1347.5 348 V319.5 H1418" stroke="#333" stroke-width="1" fill="none"/>
  <rect x="1347.5" y="319.5" width="3.5" height="27" fill="url(#hatch)"/>
  <rect x="1350" y="343" width="68" height="4" fill="url(#hatch)"/>
  <path d="M1346 347.5 H1418" stroke="#333" stroke-width="1" fill="none"/>
  <rect x="1412" y="335" width="4" height="7" fill="none" stroke="#333" stroke-width="0.9"/>
  <circle cx="1353.5" cy="339.5" r="1.2" fill="#333"/>
  <path d="M1423 291 H1428 M1423 331.5 H1428" stroke="#555" stroke-width="1.6"/>
 </g>
 <rect x="1259" y="384" width="13" height="21" fill="#cfcfcf"/>
 <rect x="1277" y="384" width="13" height="21" fill="#cfcfcf"/>
 <rect x="1300" y="384" width="88" height="21" fill="#cfcfcf"/>
 <text x="1258.7" y="401" font-family="Liberation Sans" font-size="17.5" fill="#111" stroke="#111" stroke-width="0.3" textLength="134.7" lengthAdjust="spacingAndGlyphs">A-A (3/4" = 1'-0")</text>
 <!-- PLAN -->
 <path d="M733.5 501.5 H806 Q818 501.5 818 513.5 V534 Q818 539 822 543 L872 593 Q876 597.5 882 597.5 H1033 Q1045 597.5 1045 609.5 V682.5 Q1045 694.5 1033 694.5 H733.5 Q721.5 694.5 721.5 682.5 V513.5 Q721.5 501.5 733.5 501.5 Z" fill="none" stroke="#222" stroke-width="1.2"/>
 <path d="M734.5 694.5 V698.5 H801.5 V694.5 M753.5 698.5 V701.5 M778.5 698.5 V701.5 M749 701.5 H782" stroke="#222" stroke-width="1" fill="none"/>
 <!-- ISOMETRIC -->
 <g stroke="#2a2a2a" stroke-width="1.1" fill="none" stroke-linejoin="round">
  <path d="M1199 614 L1244 585 Q1252 579 1262 582 L1280 590 Q1285 592 1292 592 H1364 L1474 531 Q1486 525 1498 530 L1542 556 Q1549 561 1548 566 Q1547 570 1542 572 L1340 689 Q1332 693 1324 690 L1198 627 Q1192 623 1193 619 Q1194 616 1199 614 Z"/>
  <path d="M1193 620 V623 Q1193 627 1199 630 L1324 694 Q1332 698 1338 695"/>
  <path d="M1384 667 L1542 576 Q1548 573 1548 569"/>
  <path d="M1215 636 V688"/>
  <path d="M1545 575.5 V625"/>
  <path d="M1215 666 L1199 675 Q1193 679 1193 683 V687 Q1193 691 1199 694 L1322 756 Q1330 760 1334 758"/>
  <path d="M1199 686 Q1202 689 1206 691 L1327 752"/>
  <path d="M1215 688 L1334 751"/>
  <path d="M1545 625 Q1549.5 626 1549.5 630 V633 Q1549.5 637 1545 638.5 L1384 731.5 M1545 634.5 L1384 727.5"/>
  <path d="M1334.5 691 V758 M1338 693 V758 M1384 664 V733.5"/>
  <path d="M1334.5 691 L1384 664 M1338 694 L1384 668.5"/>
  <path d="M1336 724 L1384 700"/>
  <path d="M1336 758 L1384 733.5"/>
  <path d="M1353 701 L1375 691.5 M1353 734.5 L1375 724" stroke-width="1.8"/>
 </g>
 <!-- TITLE BLOCK -->
 <g stroke="#333" stroke-width="1.3" fill="none">
  <rect x="631" y="819" width="238.5" height="86.5" rx="6"/>
  <rect x="877.5" y="819" width="335" height="86.5" rx="6"/>
  <rect x="1220.5" y="818.5" width="272" height="86.5" rx="6"/>
  <rect x="1500.5" y="818.5" width="164" height="86.5" rx="6"/>
 </g>
 <defs>
  <pattern id="lhatch" width="4" height="4" patternUnits="userSpaceOnUse" patternTransform="rotate(55)"><rect width="4" height="4" fill="#5a5a5a"/><rect width="1" height="4" fill="#777"/></pattern>
 </defs>
 <rect x="638.5" y="826.5" width="75" height="71" rx="6" fill="url(#lhatch)" stroke="#222" stroke-width="1"/>
 <path d="M645 885 L676 838.5 L686 854 Q663 858 664 870 Q666 884 708 885 Z" fill="#fff" stroke="#222" stroke-width="0.6"/>
 <g font-family="Liberation Sans" font-size="12.5" font-weight="bold" fill="#111" lengthAdjust="spacingAndGlyphs">
  <text x="721" y="845.5" textLength="115" lengthAdjust="spacingAndGlyphs">Microvellum Software</text>
  <text x="721" y="859.5" textLength="141" lengthAdjust="spacingAndGlyphs">444 South Haskell Street</text>
  <text x="721" y="873.5" textLength="138" lengthAdjust="spacingAndGlyphs">Central Point, OR 97502</text>
  <text x="721" y="887.5" textLength="115" lengthAdjust="spacingAndGlyphs">www.microvellum.com</text>
 </g>
 <text x="885" y="825" font-family="Liberation Sans" font-size="4.5" font-weight="bold" fill="#222">PROJECT</text>
 <g font-family="Liberation Sans" fill="#2a2a2a">
  <text x="975.5" y="836" font-size="19" textLength="137" lengthAdjust="spacingAndGlyphs">PROJECT NAME</text>
  <text x="1017.6" y="849" font-size="12" textLength="53" lengthAdjust="spacingAndGlyphs">CONTACT</text>
  <text x="991" y="877" font-size="11.5" textLength="106.7" lengthAdjust="spacingAndGlyphs">PROJECT ADDRESS</text>
  <text x="999" y="889" font-size="11.5" textLength="92" lengthAdjust="spacingAndGlyphs">PROJECT PHONE</text>
  <text x="1002" y="902" font-size="11.5" textLength="85.7" lengthAdjust="spacingAndGlyphs">PROJECT EMAIL</text>
 </g>
 <g stroke="#222" stroke-width="1.1">
  <path d="M1307.5 818.5 V905"/>
  <path d="M1220.5 826.5 H1492.5" stroke-width="1.8"/>
  <path d="M1220.5 840.5 H1492.5 M1220.5 853.5 H1492.5 M1220.5 866.5 H1492.5 M1220.5 879.5 H1492.5 M1220.5 892.5 H1492.5"/>
  <path d="M1582.5 818.5 V905 M1500.5 838.5 H1582.5 M1500.5 857.5 H1582.5 M1500.5 876.5 H1582.5 M1582.5 844.5 H1664.5"/>
 </g>
 <g font-family="Liberation Sans" font-size="4.5" font-weight="bold" fill="#222">
  <text x="1225" y="825">ITEM</text><text x="1311" y="825">MATERIAL</text>
  <text x="1504" y="824">APPROVED</text><text x="1504" y="843">APPROVED</text><text x="1504" y="862">APPROVED</text><text x="1504" y="881">DRAWN BY</text>
  <text x="1586" y="824">DATE</text><text x="1586" y="849">SHEET</text>
 </g>
 <g font-family="Liberation Sans" font-size="11" fill="#2a2a2a">
  <text x="1226" y="837.5" textLength="63" lengthAdjust="spacingAndGlyphs">Base Exterior</text>
  <text x="1226" y="850.5" textLength="55" lengthAdjust="spacingAndGlyphs">Tall Exterior</text>
  <text x="1226" y="863.5" textLength="69" lengthAdjust="spacingAndGlyphs">Upper Exterior</text>
  <text x="1226" y="876.5" textLength="34.4" lengthAdjust="spacingAndGlyphs">Interior</text>
  <text x="1226" y="889.5" textLength="32" lengthAdjust="spacingAndGlyphs">Handle</text>
  <text x="1226" y="902.5" textLength="71.5" lengthAdjust="spacingAndGlyphs">Drawer System</text>
  <text x="1312" y="837.5" textLength="19" lengthAdjust="spacingAndGlyphs">TBD</text>
  <text x="1312" y="850.5" textLength="19" lengthAdjust="spacingAndGlyphs">TBD</text>
  <text x="1312" y="863.5" textLength="19" lengthAdjust="spacingAndGlyphs">TBD</text>
  <text x="1312" y="876.5" textLength="19" lengthAdjust="spacingAndGlyphs">TBD</text>
  <text x="1312" y="889.5" textLength="19" lengthAdjust="spacingAndGlyphs">TBD</text>
  <text x="1312" y="902.5" textLength="19" lengthAdjust="spacingAndGlyphs">TBD</text>
 </g>
 <text x="1602" y="838.7" font-family="Liberation Sans" font-size="15.5" fill="#222" textLength="42" lengthAdjust="spacingAndGlyphs">DATE</text>
 <rect x="1603.5" y="867" width="39.5" height="19" fill="#d0d0d0"/>
 <text x="1604" y="881.5" font-family="Liberation Sans" font-size="15" fill="#444" textLength="36" lengthAdjust="spacingAndGlyphs">A301</text>
</svg>
<!-- scrollbars -->
<div class="a" style="left:1907px;top:160px;width:17px;height:774px;background:#efefef"></div>
<svg class="a" style="left:1907px;top:160px" width="17" height="774"><path d="M4.5 13 L8.5 9 L12.5 13" stroke="#444" stroke-width="1.6" fill="none"/><path d="M4.5 762 L8.5 766 L12.5 762" stroke="#444" stroke-width="1.6" fill="none"/><rect x="2" y="378" width="13" height="17" fill="#d2d2d3"/></svg>
<div class="a" style="left:396px;top:934px;width:1528px;height:17px;background:#efefef"></div>
<svg class="a" style="left:396px;top:934px" width="1528" height="17"><path d="M11 4.5 L7 8.5 L11 12.5" stroke="#444" stroke-width="1.6" fill="none"/><path d="M1500 4.5 L1504 8.5 L1500 12.5" stroke="#444" stroke-width="1.6" fill="none"/><rect x="759.5" y="1" width="16.5" height="15" fill="#cfcfd0"/></svg>
<!-- COMMAND LINE -->
<div class="a" style="left:365px;top:951px;width:1559px;height:59px;background:#2e3540"></div><div class="a" style="left:392px;top:951px;width:1532px;height:3px;background:#2a2c31"></div>
<div class="a" style="left:392px;top:954px;width:1530px;height:35px;background:#c9c9ca"></div>
<div class="a" style="left:392px;top:990px;width:1530px;height:20px;background:#fefefe"></div>
<div class="t" style="left:394px;top:960px;font-family:'Liberation Mono',monospace;font-size:11.7px;color:#111">Select option [Hidden lines/Scale/Visibility/Projection/Depth/Annotation/hatCh/Move/eXit] &lt;eXit&gt;:</div>
<div class="t" style="left:394px;top:975px;font-family:'Liberation Mono',monospace;font-size:11.7px;color:#111">Section view created successfully.</div>
<div class="t" style="left:429px;top:994px;font-family:'Liberation Mono',monospace;font-style:italic;font-size:11.5px;color:#8a8a8a">Type a command</div>
<svg class="a" style="left:396px;top:993px" width="30" height="14"><rect x="0.5" y="1.5" width="15" height="11" fill="none" stroke="#555" stroke-width="1"/><path d="M0.5 3.5 H15.5" stroke="#555" stroke-width="1.4"/><path d="M3 6 L5 7.5 L3 9 M6 10 H9" stroke="#555" stroke-width="0.9" fill="none"/><path d="M19 5 H25 L22 8 Z" fill="#666"/></svg>
<svg class="a" style="left:367px;top:954px" width="25" height="56">
 <g fill="#e8ebef"><rect x="4.00" y="4" width="1.7" height="1.7"/><rect x="4.00" y="6.8" width="1.7" height="1.7"/><rect x="6.85" y="4" width="1.7" height="1.7"/><rect x="6.85" y="6.8" width="1.7" height="1.7"/><rect x="9.70" y="4" width="1.7" height="1.7"/><rect x="9.70" y="6.8" width="1.7" height="1.7"/><rect x="12.55" y="4" width="1.7" height="1.7"/><rect x="12.55" y="6.8" width="1.7" height="1.7"/><rect x="15.40" y="4" width="1.7" height="1.7"/><rect x="15.40" y="6.8" width="1.7" height="1.7"/><rect x="18.25" y="4" width="1.7" height="1.7"/><rect x="18.25" y="6.8" width="1.7" height="1.7"/><rect x="21.10" y="4" width="1.7" height="1.7"/><rect x="21.10" y="6.8" width="1.7" height="1.7"/></g>
 <path d="M7 15 L15 23 M15 15 L7 23" stroke="#dfe3e8" stroke-width="1.9"/>
 <path d="M5.5 50 L14 41.5" stroke="#e8ebef" stroke-width="2.2"/><path d="M12 43 Q10 37 15 35.5 L14.5 39 L17 41 L20 39 Q20 44 14 44 Z" fill="#e8ebef"/>
</svg>
<!-- STATUS BAR -->
<div class="a" style="left:4px;top:1005px;width:388px;height:5px;background:#30353f"></div>
<div class="a" style="left:4px;top:1010px;width:1920px;height:19px;background:#222835"></div>
<svg class="a" style="left:4px;top:1010px" width="500" height="19" viewBox="4 1010 500 19">
 <path d="M17 1029 Q20 1011 26 1011 H70 Q76 1011 78 1029 Z" fill="#252b38"/>
 <path d="M73 1029 Q76 1011 82 1011 H112 Q118 1011 120 1029 Z" fill="#252b38"/>
 <path d="M117 1029 Q120 1011 126 1011 H160 Q166 1011 168 1029 Z" fill="#2b3240"/>
 <path d="M166 1029 Q169 1011 175 1011 H210 Q216 1011 218 1029 Z" fill="#252b38"/>
 <path d="M215 1029 Q218 1011 224 1011 H259 Q265 1011 267 1029 Z" fill="#252b38"/>
 <path d="M264 1029 Q267 1011 273 1011 H308 Q314 1011 316 1029 Z" fill="#252b38"/>
 <path d="M313 1029 Q316 1011 322 1011 H357 Q363 1011 365 1029 Z" fill="#252b38"/>
 <path d="M362 1029 Q365 1011 371 1011 H406 Q412 1011 414 1029 Z" fill="#252b38"/>
 <path d="M411 1029 Q414 1011 420 1011 H455 Q461 1011 463 1029 Z" fill="#252b38"/>
 <path d="M474 1020 H484 M479 1015 V1025" stroke="#c8cdd4" stroke-width="1.6"/>
</svg>
<div class="t" style="left:27px;top:1014px;color:#b8bec8;font-size:12px">Model</div>
<div class="t" style="left:85px;top:1014px;color:#b8bec8;font-size:12px">Title</div>
<div class="t" style="left:129px;top:1014px;color:#f4f6f8;font-size:12px;font-weight:bold">A301</div>
<div class="t" style="left:181px;top:1014px;color:#b8bec8;font-size:12px">A302</div>
<div class="t" style="left:230px;top:1014px;color:#b8bec8;font-size:12px">A303</div>
<div class="t" style="left:279px;top:1014px;color:#b8bec8;font-size:12px">A402</div>
<div class="t" style="left:328px;top:1014px;color:#b8bec8;font-size:12px">A403</div>
<div class="t" style="left:377px;top:1014px;color:#b8bec8;font-size:12px">A404</div>
<div class="t" style="left:426px;top:1014px;color:#b8bec8;font-size:12px">A405</div>
<svg class="a" style="left:1380px;top:1010px" width="544" height="19" viewBox="1380 1010 544 19">
 <rect x="1383" y="1013" width="40" height="16" fill="#343d4a"/>
 <rect x="1426" y="1013" width="23" height="16" fill="#4b7cc0"/>
 <rect x="1450" y="1013" width="145" height="16" fill="#343d4a"/>
 <rect x="1532" y="1013" width="22" height="16" fill="#4b7cc0"/>
 <rect x="1556" y="1013" width="22" height="16" fill="#4b7cc0"/>
 <rect x="1598" y="1013" width="72" height="16" fill="#343d4a"/>
 <rect x="1673" y="1013" width="40" height="16" fill="#343d4a"/>
 <rect x="1715" y="1013" width="24" height="16" fill="#343d4a"/>
 <rect x="1741" y="1013" width="130" height="16" fill="#343d4a"/>
 <rect x="1769" y="1013" width="22" height="16" fill="#7297d0"/>
 <rect x="1874" y="1013" width="50" height="16" fill="#343d4a"/>
 <g stroke="#d5dae1" stroke-width="1.3" fill="none">
  <path d="M1431 1019 V1029 M1431 1028 H1440"/>
  <circle cx="1463" cy="1025" r="5"/><path d="M1459 1029 L1467 1018 M1463 1020 H1468"/>
  <path d="M1496 1016 L1505 1029 M1500 1022 L1496 1029"/>
  <path d="M1537 1029 L1549 1018" stroke-width="1.6"/>
  <path d="M1561 1019 V1029 M1561 1019 H1573 V1029"/><rect x="1559" y="1016" width="4" height="4"/>
  <path d="M1604 1020 V1018 H1617 V1026 M1606 1018 L1602 1015" stroke-dasharray="2 1.5"/><path d="M1601 1014 L1606 1016 L1603 1019 Z" fill="#d5dae1"/>
  <circle cx="1639" cy="1022" r="2.5"/>
  <path d="M1662 1018 l1 2 l2 0.5 l-2 1 l-0.5 2 l-1 -2 l-2 -0.5 l2 -1 z" fill="#d5dae1"/>
  <path d="M1720 1025 H1734 M1727 1018 V1029" stroke-width="1.8"/>
  <rect x="1745.5" y="1017.5" width="6" height="6"/><circle cx="1757" cy="1025" r="3"/>
  <circle cx="1780" cy="1026" r="8" stroke="#eef2fa" stroke-width="1.6"/><path d="M1775 1029 L1785 1020" stroke="#eef2fa"/>
  <path d="M1798 1020 H1808 M1801 1016 V1025"/>
  <path d="M1847 1019 V1016 H1853 V1022 H1859 V1029"/>
  <rect x="1877.5" y="1018.5" width="17" height="11"/><path d="M1886 1023 L1891 1020 M1888 1020 H1891 V1022"/>
  <path d="M1902 1015.5 H1919 M1902 1021.5 H1919 M1902 1027.5 H1919" stroke-width="1.8"/>
 </g>
 <path d="M1632 1029 L1634 1023 L1636 1029 Z M1655 1029 L1657 1022 L1659 1029 Z" fill="#d5dae1"/>
 <circle cx="1801" cy="1019" r="1.8" fill="#fff"/><rect x="1798" y="1024" width="5" height="5" fill="#f0a020"/><path d="M1803 1022 L1811 1017 L1813 1025 L1806 1029 Z" fill="#2f6fb6"/><path d="M1806 1028 L1812 1022" stroke="#5cb85c" stroke-width="1.4"/>
 <rect x="1821" y="1017" width="16" height="12" fill="#a8acb2"/><path d="M1822 1027 Q1826 1017 1829 1025 Q1832 1031 1836 1019" stroke="#5a5e66" stroke-width="0.9" fill="none"/>
 <g transform="translate(1684 1025)"><circle r="4.5" fill="none" stroke="#d5dae1" stroke-width="3"/><g fill="#d5dae1"><rect x="-1.5" y="-8" width="3" height="3"/><rect x="-8" y="-1.5" width="3" height="3"/><rect x="5" y="-1.5" width="3" height="3"/><g transform="rotate(45)"><rect x="-1.5" y="-8" width="3" height="3"/><rect x="-8" y="-1.5" width="3" height="3"/><rect x="5" y="-1.5" width="3" height="3"/><rect x="-1.5" y="5" width="3" height="3"/></g></g></g>
 <g fill="#d5dae1"><path d="M1478 1022 H1486 L1482 1026 Z"/><path d="M1518 1022 H1526 L1522 1026 Z"/><path d="M1583 1022 H1591 L1587 1026 Z"/><path d="M1701 1022 H1709 L1705 1026 Z"/></g>
</svg>
<div class="t" style="left:1386px;top:1018px;color:#e0e4ea;font-size:11px">PAPER</div>

</body></html>
